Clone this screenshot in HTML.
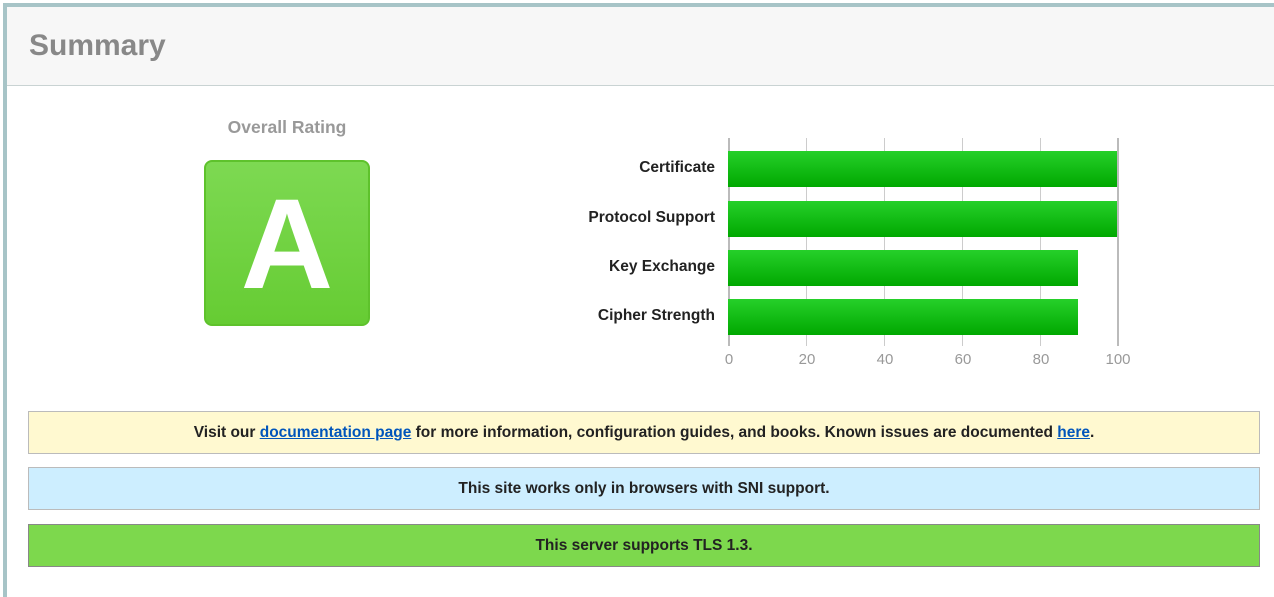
<!DOCTYPE html>
<html><head><style>
body{margin:0;width:1274px;height:581px;overflow:hidden;background:#fff;font-family:"Liberation Sans",sans-serif;position:relative}
.frame{position:absolute;left:3px;top:3px;width:1274px;height:590px;border-left:4px solid #a7c4c7;border-top:4px solid #a7c4c7;}
.hdr{position:absolute;left:7px;top:7px;width:1267px;height:78px;background:#f7f7f7;border-bottom:1px solid #c9d3d3}
.hdr h1{margin:0;position:absolute;left:22px;top:22px;font-size:30px;font-weight:bold;color:#888}
.or{position:absolute;left:204px;width:166px;top:117px;text-align:center;font-size:17.5px;font-weight:bold;color:#999}
.grade{position:absolute;left:204px;top:160px;width:162px;height:162px;border:2px solid #5ec22c;border-radius:8px;background:linear-gradient(#7dd952,#66cc33);color:#fff;font-weight:bold;font-size:128px;text-align:center;line-height:166px}
.lbl{position:absolute;right:559px;font-size:15.5px;font-weight:bold;color:#222;text-align:right;white-space:nowrap}
.bar{position:absolute;left:728px;height:36px;background:linear-gradient(#26d02a,#00a800)}
.g{position:absolute;top:138px;height:208px;width:1px;background:#ccc}
.t{position:absolute;top:351px;font-size:15px;color:#999;width:40px;text-align:center}
.box{position:absolute;left:28px;width:1230px;height:41px;border:1px solid #bbb;text-align:center;font-size:15.5px;font-weight:bold;color:#222;line-height:41px}
a{color:#0055bb;text-decoration:underline}
</style></head><body>
<div class="frame"></div>
<div class="hdr"><h1>Summary</h1></div>
<div class="or">Overall Rating</div>
<div class="grade">A</div>
<div class="g" style="left:728px;width:2px;background:#bbb"></div>
<div class="g" style="left:806px"></div>
<div class="g" style="left:884px"></div>
<div class="g" style="left:962px"></div>
<div class="g" style="left:1040px"></div>
<div class="g" style="left:1117px;width:2px;background:#bbb"></div>
<div class="bar" style="top:151px;width:389px"></div>
<div class="bar" style="top:201px;width:389px"></div>
<div class="bar" style="top:250px;width:350px"></div>
<div class="bar" style="top:299px;width:350px"></div>
<div class="lbl" style="top:159px">Certificate</div>
<div class="lbl" style="top:209px">Protocol Support</div>
<div class="lbl" style="top:258px">Key Exchange</div>
<div class="lbl" style="top:307px">Cipher Strength</div>
<div class="t" style="left:709px">0</div>
<div class="t" style="left:787px">20</div>
<div class="t" style="left:865px">40</div>
<div class="t" style="left:943px">60</div>
<div class="t" style="left:1021px">80</div>
<div class="t" style="left:1098px">100</div>
<div class="box" style="top:411px;background:#fff9d0">Visit our <a>documentation page</a> for more information, configuration guides, and books. Known issues are documented <a>here</a>.</div>
<div class="box" style="top:467px;background:#cdeeff">This site works only in browsers with SNI support.</div>
<div class="box" style="top:524px;background:#7dd84d;border-color:#888">This server supports TLS 1.3.</div>
</body></html>
